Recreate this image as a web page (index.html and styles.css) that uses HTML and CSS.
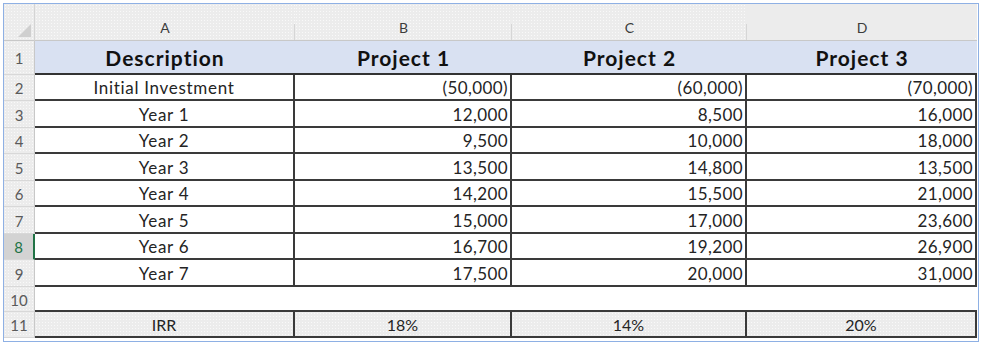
FILE: index.html
```html
<!DOCTYPE html>
<html>
<head>
<meta charset="utf-8">
<link rel="stylesheet" href="styles.css">
</head>
<body>
<div class="frame">
  <div class="sheet">
    <div class="corner"><span class="tri"></span></div>
    <div class="colhead">A</div>
    <div class="colhead">B</div>
    <div class="colhead">C</div>
    <div class="colhead last">D</div>

    <div class="rowhead r-hdr">1</div>
    <div class="title">Description</div>
    <div class="title">Project 1</div>
    <div class="title">Project 2</div>
    <div class="title">Project 3</div>

    <div class="rowhead r-odd">2</div>
    <div class="cell label">Initial Investment</div>
    <div class="cell num">(50,000)</div>
    <div class="cell num">(60,000)</div>
    <div class="cell num">(70,000)</div>

    <div class="rowhead r-even">3</div>
    <div class="cell label">Year 1</div>
    <div class="cell num">12,000</div>
    <div class="cell num">8,500</div>
    <div class="cell num">16,000</div>

    <div class="rowhead r-odd">4</div>
    <div class="cell label">Year 2</div>
    <div class="cell num">9,500</div>
    <div class="cell num">10,000</div>
    <div class="cell num">18,000</div>

    <div class="rowhead r-even">5</div>
    <div class="cell label">Year 3</div>
    <div class="cell num">13,500</div>
    <div class="cell num">14,800</div>
    <div class="cell num">13,500</div>

    <div class="rowhead r-odd">6</div>
    <div class="cell label">Year 4</div>
    <div class="cell num">14,200</div>
    <div class="cell num">15,500</div>
    <div class="cell num">21,000</div>

    <div class="rowhead r-even">7</div>
    <div class="cell label">Year 5</div>
    <div class="cell num">15,000</div>
    <div class="cell num">17,000</div>
    <div class="cell num">23,600</div>

    <div class="rowhead r-odd selected">8</div>
    <div class="cell label">Year 6</div>
    <div class="cell num">16,700</div>
    <div class="cell num">19,200</div>
    <div class="cell num">26,900</div>

    <div class="rowhead r-even">9</div>
    <div class="cell label">Year 7</div>
    <div class="cell num">17,500</div>
    <div class="cell num">20,000</div>
    <div class="cell num">31,000</div>

    <div class="rowhead r-blank">10</div>
    <div class="blank"></div>

    <div class="rowhead r-irr">11</div>
    <div class="irr">IRR</div>
    <div class="irr">18%</div>
    <div class="irr">14%</div>
    <div class="irr">20%</div>
  </div>
</div>
</body>
</html>
```

FILE: styles.css
```css
* { box-sizing: border-box; }
html, body { margin: 0; padding: 0; background: #ffffff; }
body { padding: 3px 0 0 3px; }

.frame {
  width: 976px;
  height: 339px;
  border: 1px solid #8eb0e4;
  background: #ffffff;
  padding: 0 1px 3px 0;
}

.sheet {
  display: grid;
  grid-template-columns: 31px 260px 217px 235px 230px;
  grid-template-rows: 37px 34px 26px 27px 26px 27px 26px 27px 26px 27px 25px 26px;
  font-family: Lato, "Open Sans", sans-serif;
  color: #242424;
}

.corner, .colhead, .rowhead, .irr {
  background-color: #ececec;
  background-image: radial-gradient(circle, #f9f9f9 0.7px, transparent 0.9px);
  background-size: 3px 3px;
}

.corner {
  position: relative;
  border-right: 1px solid #d4d4d4;
  border-bottom: 1px solid #c8c8c8;
}
.tri {
  position: absolute;
  right: 3px;
  bottom: 3px;
  width: 0;
  height: 0;
  border-left: 13px solid transparent;
  border-bottom: 13px solid #cfcfcf;
}

.colhead {
  display: flex;
  align-items: flex-end;
  justify-content: center;
  padding-bottom: 4px;
  font-size: 14px;
  color: #3c3c3c;
  border-bottom: 1px solid #c8c8c8;
  background-image:
    linear-gradient(#d6d6d6, #d6d6d6),
    radial-gradient(circle, #f9f9f9 0.7px, transparent 0.9px);
  background-size: 1px 16px, 3px 3px;
  background-position: right bottom, 0 0;
  background-repeat: no-repeat, repeat;
}
.colhead.last { background-image: radial-gradient(circle, #f9f9f9 0.7px, transparent 0.9px); background-size: 3px 3px; }

.rowhead {
  display: flex;
  align-items: center;
  justify-content: center;
  font-size: 15px;
  color: #5a5a5a;
  border-right: 1px solid #c8c8c8;
  border-bottom: 1px solid #d8d8d8;
  padding-top: 1px;
}
.rowhead.selected {
  background: #d3d3d3;
  color: #217346;
  border-right: 2px solid #217346;
}

.title {
  display: flex;
  align-items: center;
  justify-content: center;
  background: #d9e1f2;
  border-bottom: 2px solid #333333;
  font-weight: 700;
  font-size: 21px;
  letter-spacing: 1px;
  color: #111111;
  padding-top: 1px;
}

.cell {
  display: flex;
  align-items: center;
  font-size: 17px;
  border-right: 2px solid #3a3a3a;
  border-bottom: 2px solid #3a3a3a;
  padding-top: 1px;
}
.cell.label { justify-content: center; letter-spacing: 0.7px; }
.cell.num { justify-content: flex-end; padding-right: 2px; letter-spacing: 0.4px; }

.blank {
  grid-column: 2 / span 4;
  border-bottom: 2px solid #3a3a3a;
}

.irr {
  display: flex;
  align-items: center;
  justify-content: center;
  font-size: 16px;
  border-right: 2px solid #3a3a3a;
  border-bottom: 2px solid #3a3a3a;
}
.rowhead.r-irr { border-bottom: 1px solid #d8d8d8; }
```
